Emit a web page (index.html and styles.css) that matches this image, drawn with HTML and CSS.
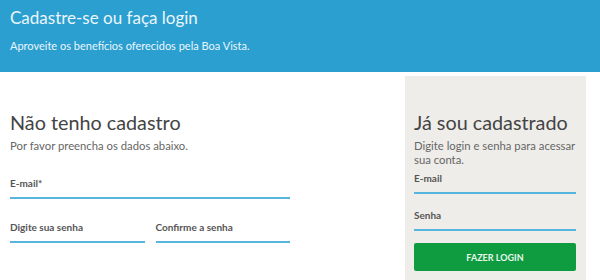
FILE: index.html
```html
<!DOCTYPE html>
<html lang="pt-BR">
<head>
<meta charset="utf-8">
<link rel="stylesheet" href="styles.css">
</head>
<body>
<header class="hero">
  <h1 class="hero-title">Cadastre-se ou faça login</h1>
  <p class="hero-sub">Aproveite os benefícios oferecidos pela Boa Vista.</p>
</header>
<main class="content">
  <section class="signup">
    <h2 class="sec-title">Não tenho cadastro</h2>
    <p class="sec-sub">Por favor preencha os dados abaixo.</p>
    <div class="field field-email">
      <label class="label">E-mail*</label>
      <div class="line"></div>
    </div>
    <div class="row">
      <div class="field">
        <label class="label">Digite sua senha</label>
        <div class="line"></div>
      </div>
      <div class="field">
        <label class="label">Confirme a senha</label>
        <div class="line"></div>
      </div>
    </div>
  </section>
  <aside class="login">
    <h2 class="sec-title">Já sou cadastrado</h2>
    <p class="sec-sub login-sub">Digite login e senha para acessar sua conta.</p>
    <div class="field">
      <label class="label">E-mail</label>
      <div class="line"></div>
    </div>
    <div class="field">
      <label class="label">Senha</label>
      <div class="line"></div>
    </div>
    <button class="btn">FAZER LOGIN</button>
  </aside>
</main>
</body>
</html>
```
FILE: styles.css
```css
* { box-sizing: border-box; }
html, body { margin: 0; padding: 0; }
body {
  width: 600px;
  height: 280px;
  overflow: hidden;
  background: #fff;
  font-family: Lato, "Open Sans", sans-serif;
  color: #555;
}
.hero {
  background: #2a9fd0;
  height: 74px;
  padding: 7px 10px 0;
  border-bottom: 2px solid #fff;
}
.hero-title {
  margin: 0;
  font-weight: 400;
  font-size: 17px;
  line-height: 22px;
  color: #eaf6fb;
}
.hero-sub {
  margin: 10px 0 0;
  font-size: 11px;
  line-height: 14px;
  color: #eaf6fb;
}
.content {
  display: flex;
  height: 206px;
  padding-top: 2px;
}
.signup {
  width: 405px;
  padding: 34px 115px 0 10px;
}
.login {
  width: 181px;
  background: #efede9;
  padding: 34px 10px 0 9px;
}
.sec-title {
  margin: 0;
  font-weight: 400;
  font-size: 19.8px;
  line-height: 24px;
  color: #444;
  white-space: nowrap;
}
.sec-sub {
  margin: 5px 0 0;
  font-size: 11.3px;
  line-height: 14px;
  color: #666;
}
.login-sub { width: 162px; }
.field { display: flex; flex-direction: column; }
.label {
  font-size: 10px;
  font-weight: 700;
  line-height: 12px;
  color: #555;
}
.line {
  height: 2px;
  background: #55b5dd;
  margin-top: 8px;
}
.signup .field-email { margin-top: 24px; }
.row {
  display: flex;
  gap: 11px;
  margin-top: 22px;
}
.row .field { flex: 1; }
.login .field { margin-top: 5px; }
.login .field + .field { margin-top: 15px; }
.btn {
  display: block;
  width: 100%;
  margin-top: 12px;
  height: 28px;
  border: none;
  border-radius: 2px;
  background: #0f9b40;
  color: #e8f6ec;
  font-family: inherit;
  font-size: 9px;
  font-weight: 700;
}
```
